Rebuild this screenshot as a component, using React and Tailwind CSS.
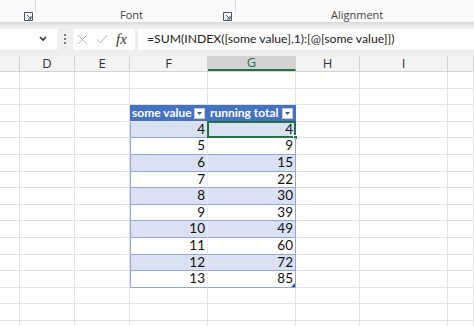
import React from "react";

const COLS = [
  { key: "C", w: "w-[20px]" },
  { key: "D", w: "w-[55px]" },
  { key: "E", w: "w-[55px]" },
  { key: "F", w: "w-[78px]" },
  { key: "G", w: "w-[88px]" },
  { key: "H", w: "w-[64px]" },
  { key: "I", w: "w-[88px]" },
  { key: "J", w: "flex-1" },
];

const DATA = [
  [4, 4],
  [5, 9],
  [6, 15],
  [7, 22],
  [8, 30],
  [9, 39],
  [10, 49],
  [11, 60],
  [12, 72],
  [13, 85],
];

const Launcher = () => (
  <svg width="9" height="9" viewBox="0 0 9 9" className="text-gray-600">
    <path d="M0.5 0.5h8v8h-8z" fill="none" stroke="currentColor" strokeWidth="1" />
    <path d="M3 3l4 4M7 4v3h-3" fill="none" stroke="currentColor" strokeWidth="1" />
  </svg>
);

const FilterButton = () => (
  <div className="absolute right-[2px] top-[3px] w-[11px] h-[11px] bg-white border border-[#c8c8c8] flex items-center justify-center">
    <svg width="5" height="3" viewBox="0 0 5 3">
      <path d="M0 0h5L2.5 3z" fill="#555" />
    </svg>
  </div>
);

function Cell({ col, children, className = "" }) {
  return (
    <div className={`${col.w} shrink-0 h-full border-r border-[#e2e2e2] relative ${className}`}>
      {children}
    </div>
  );
}

function GridRow({ render }) {
  return (
    <div className="flex h-[16.6px] border-b border-[#e2e2e2]">
      {COLS.map((c) => (
        <React.Fragment key={c.key}>{render(c)}</React.Fragment>
      ))}
    </div>
  );
}

export default function App() {
  return (
    <div className="w-[474px] h-[326px] overflow-hidden bg-white" style={{ fontFamily: "Lato, sans-serif" }}>
      {/* ribbon group labels */}
      <div className="h-[22px] bg-[#fafafa] flex text-[11px] text-[#444]" style={{ fontFamily: "'Open Sans', sans-serif" }}>
        <div className="w-[36px] relative">
          <div className="absolute right-0 top-0 h-[13px] border-r border-[#dcdcdc]" />
          <span className="absolute right-[3px] bottom-[1px]"><Launcher /></span>
        </div>
        <div className="w-[200px] relative">
          <div className="absolute right-0 top-0 h-[13px] border-r border-[#dcdcdc]" />
          <span className="absolute left-[84px] -bottom-[1px]">Font</span>
          <span className="absolute right-[4px] bottom-[1px]"><Launcher /></span>
        </div>
        <div className="flex-1 relative">
          <span className="absolute left-[95px] -bottom-[1px]">Alignment</span>
        </div>
      </div>
      <div className="h-[4px] bg-gradient-to-b from-[#d9d9d9] to-[#ececec]" />

      {/* formula bar */}
      <div className="h-[25px] bg-[#efefef] flex items-center gap-[3px] pt-[1px]">
        <div className="w-[57px] h-[21px] bg-white flex items-center justify-end pr-[10px]">
          <svg width="8" height="6" viewBox="0 0 8 6">
            <path d="M1 1l3 3 3-3" fill="none" stroke="#333" strokeWidth="1.6" />
          </svg>
        </div>
        <div className="w-[10px] flex flex-col items-center gap-[2px]">
          <span className="w-[2px] h-[2px] bg-[#555] rounded-full" />
          <span className="w-[2px] h-[2px] bg-[#555] rounded-full" />
          <span className="w-[2px] h-[2px] bg-[#555] rounded-full" />
        </div>
        <div className="w-[62px] h-[21px] bg-white rounded-[2px] flex items-center gap-[8px] pl-[4px]">
          <svg width="11" height="11" viewBox="0 0 11 11">
            <path d="M1 1l9 9M10 1l-9 9" stroke="#b5b5b5" strokeWidth="1" />
          </svg>
          <svg width="12" height="10" viewBox="0 0 12 10">
            <path d="M1 5.5l3.5 3.5L11 1" fill="none" stroke="#b5b5b5" strokeWidth="1" />
          </svg>
          <span className="text-[15px] italic text-[#333] leading-none" style={{ fontFamily: "'Liberation Serif', serif" }}>fx</span>
        </div>
        <div className="flex-1 h-[21px] bg-white flex items-center pl-[9px] text-[12.2px] text-[#222] whitespace-nowrap overflow-hidden">
          =SUM(INDEX([some value],1):[@[some value]])
        </div>
      </div>
      <div className="h-[5px] bg-[#efefef]" />

      {/* column headers */}
      <div className="flex h-[16px] bg-[#f3f3f3] text-[13px] text-[#333] border-b border-[#d4d4d4]" style={{ fontFamily: "'Open Sans', sans-serif" }}>
        {COLS.map((c) => (
          <div
            key={c.key}
            className={`${c.w} shrink-0 border-r border-[#d4d4d4] flex items-center justify-center leading-none ${
              c.key === "G" ? "bg-[#d2d2d2] text-[#217346] border-b-2 border-b-[#217346]" : ""
            }`}
          >
            {c.key === "C" || c.key === "J" ? "" : c.key}
          </div>
        ))}
      </div>

      {/* cells */}
      <div className="text-[13.5px] text-[#111]">
        <GridRow render={(c) => <Cell col={c} />} />
        <GridRow render={(c) => <Cell col={c} />} />
        {/* table header */}
        <GridRow
          render={(c) =>
            c.key === "F" ? (
              <Cell col={c} className="bg-[#4472c4] text-white font-bold text-[12px] flex items-center pl-[2px] leading-none border-r-[#4472c4] whitespace-nowrap">
                some value
                <FilterButton />
              </Cell>
            ) : c.key === "G" ? (
              <Cell col={c} className="bg-[#4472c4] text-white font-bold text-[12px] flex items-center pl-[2px] leading-none border-r-[#4472c4] whitespace-nowrap">
                running total
                <FilterButton />
              </Cell>
            ) : (
              <Cell col={c} />
            )
          }
        />
        {DATA.map(([v, t], i) => {
          const band = i % 2 === 0 ? "bg-[#d9e1f2]" : "bg-white";
          return (
            <div key={v} className="flex h-[16.6px]">
              {COLS.map((c) => {
                if (c.key === "F") {
                  return (
                    <div
                      key={c.key}
                      className={`${c.w} shrink-0 h-full ${band} border-l border-b border-[#8ea9db] border-r border-r-[#e8ebf3] flex items-center justify-end pr-[2px] leading-none`}
                    >
                      {v}
                    </div>
                  );
                }
                if (c.key === "G") {
                  return (
                    <div
                      key={c.key}
                      className={`${c.w} shrink-0 h-full ${band} border-b border-r border-[#8ea9db] flex items-center justify-end pr-[2px] leading-none relative`}
                    >
                      {t}
                      {i === 0 && (
                        <>
                          <div className="absolute -left-px -top-px -right-px -bottom-px border-2 border-[#217346]" />
                          <div className="absolute -right-[3px] -bottom-[3px] w-[5px] h-[5px] bg-[#217346] border border-white" />
                        </>
                      )}
                      {i === DATA.length - 1 && (
                        <svg className="absolute right-0 bottom-0" width="4" height="4" viewBox="0 0 4 4">
                          <path d="M4 0v4H0z" fill="#2f5597" />
                        </svg>
                      )}
                    </div>
                  );
                }
                return (
                  <div key={c.key} className={`${c.w} shrink-0 h-full border-r border-b border-[#e2e2e2]`} />
                );
              })}
            </div>
          );
        })}
        <GridRow render={(c) => <Cell col={c} />} />
        <GridRow render={(c) => <Cell col={c} />} />
        <GridRow render={(c) => <Cell col={c} />} />
      </div>
    </div>
  );
}
